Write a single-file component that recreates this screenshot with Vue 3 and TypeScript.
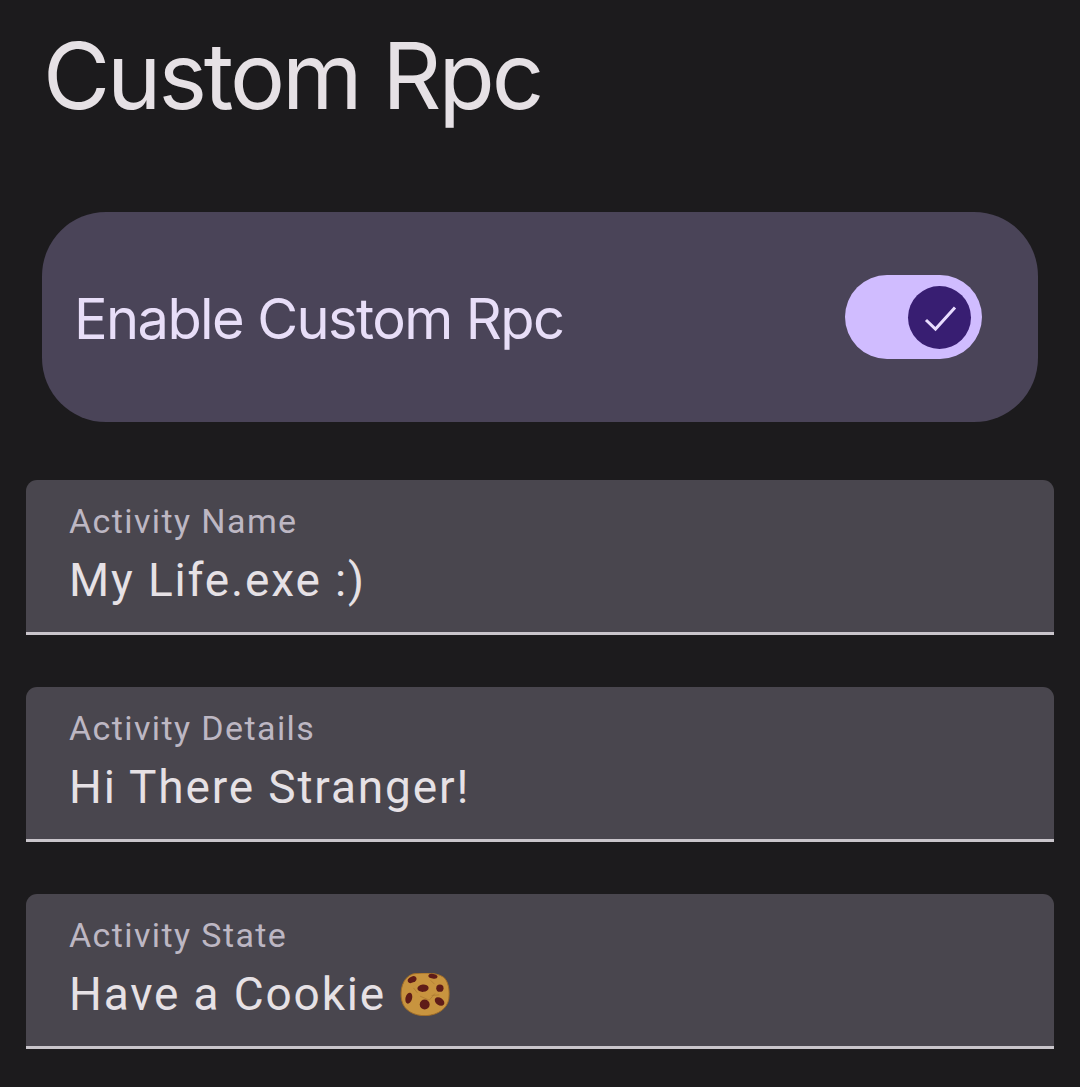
<script setup lang="ts">
const fields = [
  { label: 'Activity Name', value: 'My Life.exe :)' },
  { label: 'Activity Details', value: 'Hi There Stranger!' },
  { label: 'Activity State', value: 'Have a Cookie' },
]
const chips = [
  { x: 36, y: 20, rx: 14, ry: 9, r: -25 },
  { x: 99, y: 10, rx: 14, ry: 7, r: 10 },
  { x: 69, y: 46, rx: 17, ry: 11, r: -5 },
  { x: 120, y: 46, rx: 11, ry: 11, r: 0 },
  { x: 26, y: 76, rx: 10, ry: 17, r: 15 },
  { x: 74, y: 95, rx: 15, ry: 15, r: 0 },
  { x: 119, y: 86, rx: 16, ry: 11, r: 35 },
]
</script>

<template>
  <main class="page">
    <h1 class="title">Custom Rpc</h1>
    <section class="toggle-card">
      <span class="toggle-label">Enable Custom Rpc</span>
      <span class="switch">
        <span class="thumb">
          <svg class="check" viewBox="0 0 32 32" fill="none">
            <path d="M2 19 L11.5 28 L31 6.5" stroke="#e9ddff" stroke-width="3" />
          </svg>
        </span>
      </span>
    </section>
    <div class="fields">
      <div v-for="(f, i) in fields" :key="f.label" class="field">
        <span class="label">{{ f.label }}</span>
        <span class="value">{{ f.value }}
          <svg v-if="i === 2" class="cookie" viewBox="0 0 150 130">
            <path d="M38 3 C62 -1 108 -3 130 12 C146 24 150 52 147 78 C143 106 116 127 78 129 C42 130 12 114 5 84 C-2 54 6 14 38 3 Z" fill="#c8943f" stroke="#a06d28" stroke-width="3" />
            <path d="M60 70 L88 82 M88 82 L105 62 M40 45 L52 60 M92 22 L104 34 M95 68 L118 66" stroke="#a9772f" stroke-width="2" fill="none" />
            <ellipse
              v-for="(c, j) in chips"
              :key="j"
              :cx="c.x"
              :cy="c.y"
              :rx="c.rx"
              :ry="c.ry"
              :transform="`rotate(${c.r} ${c.x} ${c.y})`"
              fill="#5f1c18"
            />
          </svg>
        </span>
      </div>
    </div>
  </main>
</template>

<style scoped>
.page {
  width: 1080px;
  height: 1087px;
  overflow: hidden;
  box-sizing: border-box;
  background: #1c1b1d;
  padding: 24px 26px 0;
  font-family: Roboto, "Noto Sans", sans-serif;
}
.title {
  margin: 0 0 0 17px;
  height: 104px;
  font-family: Inter, Roboto, sans-serif;
  font-weight: 400;
  font-size: 92px;
  line-height: 104px;
  letter-spacing: -3.1px;
  color: #e6e1e5;
}
.toggle-card {
  margin: 84px 16px 0;
  height: 210px;
  box-sizing: border-box;
  border-radius: 64px;
  background: #4a4458;
  display: flex;
  align-items: center;
  justify-content: space-between;
  padding: 0 56px 0 32px;
}
.toggle-label {
  padding-top: 3px;
  font-family: Inter, Roboto, sans-serif;
  font-weight: 400;
  font-size: 56px;
  letter-spacing: -1.6px;
  color: #e8def8;
}
.switch {
  width: 137px;
  height: 84px;
  border-radius: 42px;
  background: #d0bcff;
  display: flex;
  align-items: center;
  justify-content: flex-end;
  padding-right: 11px;
  box-sizing: border-box;
}
.thumb {
  width: 63px;
  height: 63px;
  border-radius: 50%;
  background: #381e72;
  display: flex;
  align-items: center;
  justify-content: center;
}
.check {
  width: 32px;
  height: 32px;
  overflow: visible;
}
.fields {
  margin-top: 58px;
  display: flex;
  flex-direction: column;
  gap: 52px;
}
.field {
  height: 155px;
  box-sizing: border-box;
  background: #49464e;
  border-radius: 11px 11px 0 0;
  border-bottom: 3px solid #c9c5cb;
  padding: 21px 43px 0;
  display: flex;
  flex-direction: column;
}
.label {
  font-size: 34px;
  line-height: 40px;
  letter-spacing: 1.4px;
  color: #bdb7c3;
}
.value {
  margin-top: 11px;
  font-size: 46px;
  line-height: 56px;
  letter-spacing: 1.85px;
  color: #e6e1e5;
  display: flex;
  align-items: center;
  gap: 14px;
}
.cookie {
  width: 50px;
  height: 43px;
}
</style>
